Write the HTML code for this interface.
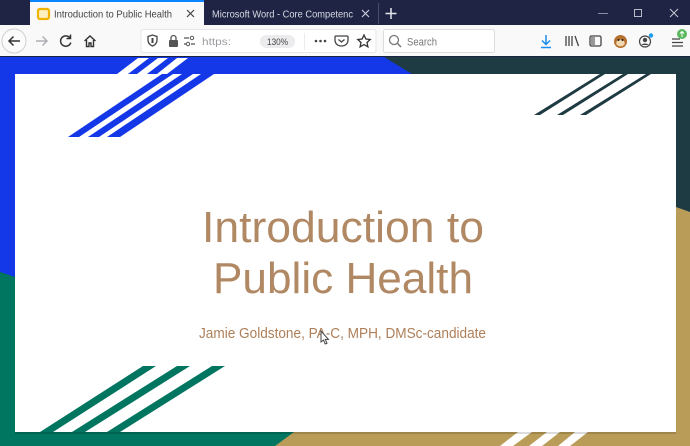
<!DOCTYPE html>
<html><head><meta charset="utf-8"><style>
html,body{margin:0;padding:0;background:#fff}
body{width:690px;height:446px;overflow:hidden;position:relative}
svg{position:absolute;left:0;top:0;display:block}
text{font-family:"Liberation Sans",sans-serif}
</style></head><body>
<svg width="690" height="446" viewBox="0 0 690 446" xmlns="http://www.w3.org/2000/svg">
<!-- slide background -->
<rect x="0" y="57" width="690" height="389" fill="#1e3a42"/>
<polygon points="0,57 384,57 412,74 400,280 15,277 0,272" fill="#1438e8"/>
<polygon points="0,272 15,277 300,432 275,446 0,446" fill="#00755f"/>
<polygon points="676,207 690,212 690,446 275,446 294,432" fill="#b99c58"/>
<!-- white stripes over bg top -->
<polygon points="117,74 128,74 149,58 138,58" fill="#fff"/>
<polygon points="137,74 147,74 168,58 158,58" fill="#fff"/>
<polygon points="157,74 167,74 188,58 177,58" fill="#fff"/>
<!-- white stripes over gold -->
<polygon points="500,446 513,446 532,432 518,432" fill="#fff"/>
<polygon points="529,446 542,446 560,432 547,432" fill="#fff"/>
<polygon points="558,446 570,446 588,432 575,432" fill="#fff"/>
<!-- slide -->
<rect x="15" y="74" width="661" height="358" fill="#fff"/>
<rect x="0" y="432" width="15" height="0" fill="#000"/>
<rect x="15" y="432" width="661" height="2" fill="#000" opacity=".14"/>
<!-- blue stripes -->
<polygon points="68,137 79,137 173,74 162,74" fill="#1438e8"/>
<polygon points="88,137 99,137 193,74 182,74" fill="#1438e8"/>
<polygon points="107,137 120,137 214,74 201,74" fill="#1438e8"/>
<!-- dark stripes -->
<polygon points="534,115 540,115 605,74 600,74" fill="#1e3a42"/>
<polygon points="557,115 563,115 628,74 623,74" fill="#1e3a42"/>
<polygon points="580,115 586,115 651,74 646,74" fill="#1e3a42"/>
<!-- green stripes -->
<polygon points="40,432 53,432 156,366 143,366" fill="#00755f"/>
<polygon points="72,432 85,432 190,366 177,366" fill="#00755f"/>
<polygon points="107,432 120,432 225,366 212,366" fill="#00755f"/>
<!-- slide text -->
<text x="202" y="242" font-size="44" fill="#b08863" textLength="282" lengthAdjust="spacingAndGlyphs">Introduction to</text>
<text x="213" y="293" font-size="44" fill="#b08863" textLength="260" lengthAdjust="spacingAndGlyphs">Public Health</text>
<text x="199" y="338" font-size="14.5" fill="#ae7f58" textLength="287" lengthAdjust="spacingAndGlyphs">Jamie Goldstone, PA-C, MPH, DMSc-candidate</text>
<!-- cursor -->
<path d="M321 331v11l2.500-2 1.700 4 1.800-.8-1.700-3.800h3.200z" fill="#fff" stroke="#444" stroke-width="1"/>

<!-- title bar -->
<rect x="0" y="0" width="690" height="25" fill="#1f2444"/>
<rect x="30" y="1" width="174" height="24" fill="#f9f9fa"/>
<rect x="30" y="0" width="174" height="2" fill="#0a84ff"/>
<rect x="38" y="9" width="11" height="10" rx="2" fill="#fdf0c0" stroke="#f0b400" stroke-width="2.200"/>
<text x="54" y="17.500" font-size="10.500" fill="#444" textLength="118" lengthAdjust="spacingAndGlyphs">Introduction to Public Health</text>
<path d="M187 10l7 7M194 10l-7 7" stroke="#444" stroke-width="1.200"/>
<text x="212" y="17.500" font-size="10.500" fill="#d8dae4" textLength="141" lengthAdjust="spacingAndGlyphs">Microsoft Word - Core Competenc</text>
<path d="M362 10l7 7M369 10l-7 7" stroke="#ccd" stroke-width="1.200"/>
<rect x="378" y="3" width="1" height="21" fill="#4a4e6c"/>
<path d="M391 8v11M385.500 13.500h11" stroke="#e6e7ee" stroke-width="1.500"/>
<path d="M598 13.500h10" stroke="#8a8da3" stroke-width="1"/>
<rect x="634.500" y="9.500" width="7" height="7" fill="none" stroke="#b8bac8" stroke-width="1"/>
<path d="M670 9l8 8M678 9l-8 8" stroke="#c8cad6" stroke-width="1"/>

<!-- toolbar -->
<rect x="0" y="25" width="690" height="31" fill="#f9f9fa"/>
<rect x="0" y="56" width="690" height="1" fill="#1a2440"/>
<circle cx="14" cy="41" r="12" fill="#fbfbfb" stroke="#d0d0d2"/>
<path d="M20 41H9M13.500 36.500L9 41l4.500 4.500" fill="none" stroke="#333" stroke-width="1.500"/>
<path d="M47 41H36M42.500 36.500L47 41l-4.500 4.500" fill="none" stroke="#b0b0b4" stroke-width="1.500"/>
<path d="M70 38a5.200 5.200 0 1 0 .8 4.500M70.500 34.500v4h-4" fill="none" stroke="#333" stroke-width="1.500"/>
<path d="M84.500 41l5.500-5 5.500 5M86.500 40v6.500h2.500v-3.500h2v3.500h2.500V40" fill="none" stroke="#333" stroke-width="1.400"/>
<rect x="141" y="29.500" width="235" height="23" rx="2" fill="#fff" stroke="#e6e6e8"/>
<path d="M148 36.500l4.500-1.500 4.500 1.500v3.500c0 3-2 5-4.500 6-2.500-1-4.500-3-4.500-6z" fill="none" stroke="#444" stroke-width="1.300"/>
<rect x="151.500" y="38" width="2" height="5" fill="#444"/>
<rect x="169" y="40" width="9" height="7" rx="1" fill="#555"/>
<path d="M171 40v-2a2.500 2.500 0 0 1 5 0v2" fill="none" stroke="#555" stroke-width="1.300"/>
<path d="M184 38h5M191 44h4M184 44h2" stroke="#555" stroke-width="1.200"/>
<circle cx="192" cy="38" r="1.700" fill="none" stroke="#555"/>
<circle cx="188" cy="44" r="1.700" fill="none" stroke="#555"/>
<text x="202" y="45" font-size="10.500" fill="#9a9aa0" textLength="29" lengthAdjust="spacingAndGlyphs">https:</text>
<rect x="260" y="35" width="35" height="13" rx="6.500" fill="#ececee"/>
<text x="267" y="45" font-size="9.500" fill="#444" textLength="21" lengthAdjust="spacingAndGlyphs">130%</text>
<rect x="304" y="33" width="1" height="17" fill="#ececee"/>
<circle cx="316" cy="41" r="1.300" fill="#444"/><circle cx="320.500" cy="41" r="1.300" fill="#444"/><circle cx="325" cy="41" r="1.300" fill="#444"/>
<path d="M336 36h11a1 1 0 0 1 1 1v3c0 3.500-2.500 6-6.500 6s-6.500-2.500-6.500-6v-3a1 1 0 0 1 1-1z" fill="none" stroke="#444" stroke-width="1.300"/>
<path d="M338.500 39.500l3 2.500 3-2.500" fill="none" stroke="#444" stroke-width="1.300"/>
<path d="M364 35l1.900 4 4.300.5-3.200 3 .9 4.300-3.900-2.200-3.900 2.200.9-4.300-3.200-3 4.300-.5z" fill="none" stroke="#333" stroke-width="1.300"/>
<rect x="383.500" y="29.500" width="111" height="23" rx="2" fill="#fff" stroke="#dcdcde"/>
<circle cx="394" cy="40" r="4.500" fill="none" stroke="#777" stroke-width="1.300"/>
<path d="M397.300 43.300l3.700 3.700" stroke="#777" stroke-width="1.400"/>
<text x="407" y="45.500" font-size="11" fill="#777" textLength="30" lengthAdjust="spacingAndGlyphs">Search</text>
<path d="M546 35v9M542 40.500l4 4 4-4" fill="none" stroke="#1a8cf0" stroke-width="1.500"/>
<path d="M541 47.500h10" stroke="#1a8cf0" stroke-width="1.500"/>
<path d="M566 36v10M569 36v10M572 36v10M575 36l3.500 10" stroke="#444" stroke-width="1.300" fill="none"/>
<rect x="590" y="36" width="11" height="10" rx="1.500" fill="none" stroke="#444" stroke-width="1.300"/>
<rect x="591" y="37" width="4" height="8" fill="#999"/>
<circle cx="620.500" cy="41.500" r="6.500" fill="#b4702c"/>
<ellipse cx="620.500" cy="43" rx="4.300" ry="3.300" fill="#f1d7ae"/>
<circle cx="618.500" cy="40" r="1" fill="#222"/><circle cx="622.500" cy="40" r="1" fill="#222"/>
<circle cx="645" cy="41.500" r="5.500" fill="none" stroke="#444" stroke-width="1.200"/>
<circle cx="645" cy="40" r="2.200" fill="#444"/>
<path d="M641.500 45c1-2 6-2 7 0" fill="#444"/>
<circle cx="651" cy="35.500" r="2.200" fill="#1a9cf0"/>
<path d="M672 39h8M672 42.500h11M672 46h11" stroke="#444" stroke-width="1.300"/>
<circle cx="682" cy="34" r="5" fill="#5cb85c"/>
<path d="M682 37v-5M680 33.500l2-2 2 2" fill="none" stroke="#fff" stroke-width="1"/>
</svg>
</body></html>
